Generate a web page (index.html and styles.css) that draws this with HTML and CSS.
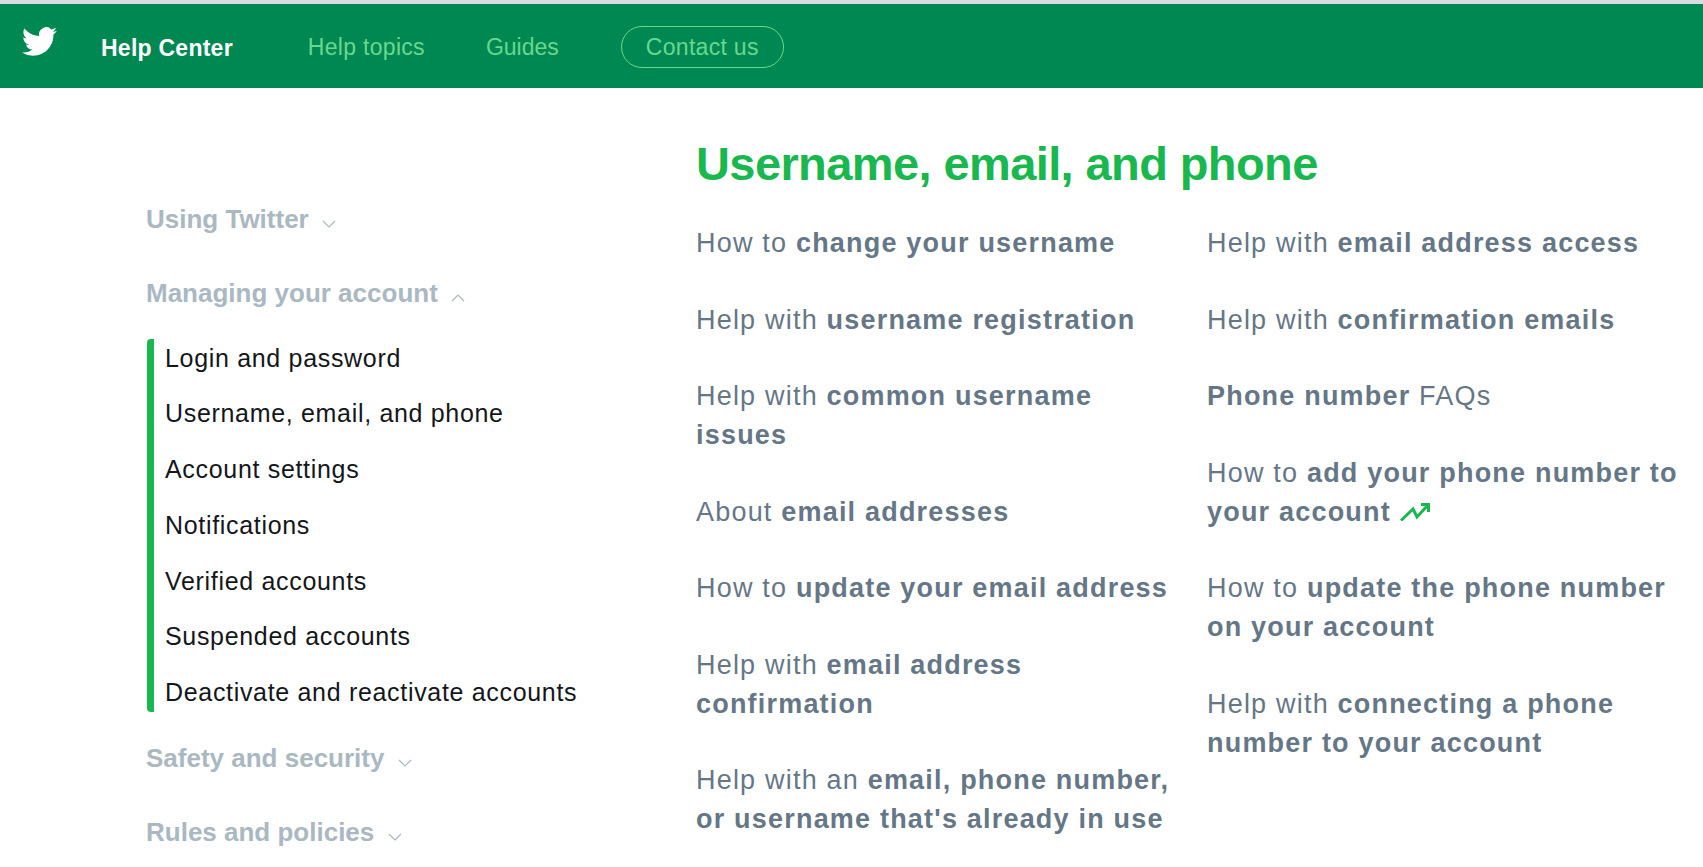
FILE: index.html
```html
<!DOCTYPE html>
<html lang="en">
<head>
    <meta charset="UTF-8">
    <title>Username, email, and phone</title>
    <link rel="stylesheet" href="styles.css">
</head>
<body>
<div class="header">
    <svg class="logo" viewBox="0 0 24 24"><path d="M23.95 4.57a10 10 0 0 1-2.82.77 4.96 4.96 0 0 0 2.16-2.72c-.95.55-2 .96-3.12 1.19a4.92 4.92 0 0 0-8.38 4.48C7.69 8.1 4.07 6.13 1.64 3.16a4.82 4.82 0 0 0-.67 2.48c0 1.71.87 3.21 2.19 4.1a4.9 4.9 0 0 1-2.23-.62v.06a4.92 4.92 0 0 0 3.95 4.83 5 5 0 0 1-2.21.08 4.94 4.94 0 0 0 4.6 3.42A9.87 9.87 0 0 1 0 19.54a13.94 13.94 0 0 0 7.55 2.21c9.05 0 14-7.5 14-13.98 0-.21 0-.42-.02-.63a9.94 9.94 0 0 0 2.46-2.55z"/></svg>
    <a class="brand">Help Center</a>
    <a class="nav-link topics">Help topics</a>
    <a class="nav-link guides">Guides</a>
    <a class="nav-link contact">Contact us</a>
</div>
<div class="main">
    <div class="side">
        <div class="group">Using Twitter <svg class="chev" viewBox="0 0 14 8"><path d="M1 1l6 6 6-6"/></svg></div>
        <div class="group">Managing your account <svg class="chev" viewBox="0 0 14 8"><path d="M1 7l6-6 6 6"/></svg></div>
        <ul class="sub">
            <li>Login and password</li>
            <li>Username, email, and phone</li>
            <li>Account settings</li>
            <li>Notifications</li>
            <li>Verified accounts</li>
            <li>Suspended accounts</li>
            <li>Deactivate and reactivate accounts</li>
        </ul>
        <div class="group">Safety and security <svg class="chev" viewBox="0 0 14 8"><path d="M1 1l6 6 6-6"/></svg></div>
        <div class="group">Rules and policies <svg class="chev" viewBox="0 0 14 8"><path d="M1 1l6 6 6-6"/></svg></div>
    </div>
    <div class="content">
        <h1>Username, email, and phone</h1>
        <div class="cols">
            <div class="col col-left">
                <p>How to <b>change your username</b></p>
                <p>Help with <b>username registration</b></p>
                <p>Help with <b>common username issues</b></p>
                <p>About <b>email addresses</b></p>
                <p>How to <b>update your email address</b></p>
                <p>Help with <b>email address confirmation</b></p>
                <p>Help with an <b>email, phone number, or username that's already in use</b></p>
            </div>
            <div class="col col-right">
                <p>Help with <b>email address access</b></p>
                <p>Help with <b>confirmation emails</b></p>
                <p><b>Phone number</b> FAQs</p>
                <p>How to <b>add your phone number to your account</b> <svg class="trend" viewBox="0 0 30 18"><path d="M1 17.5L13 6l4 8L28 2"/><path d="M21 1.5h7.5V9"/></svg></p>
                <p>How to <b>update the phone number on your account</b></p>
                <p>Help with <b>connecting a phone number to your account</b></p>
            </div>
        </div>
    </div>
</div>
</body>
</html>
```

FILE: styles.css
```css
*{
    margin: 0;
    padding: 0;
    box-sizing: border-box;
}
html, body{
    height: 867px;
    overflow: hidden;
}
body{
    background: #fff;
    font-family: "Liberation Sans", Arial, sans-serif;
}
li{
    list-style: none;
}
.header{
    height: 88px;
    background: #008853;
    border-top: 4px solid #d6dcdf;
    display: flex;
    align-items: center;
    padding-left: 22px;
}
.logo{
    width: 35px;
    height: 35px;
    fill: #fff;
    margin-right: 44px;
    margin-top: -10px;
}
.brand{
    color: #fff;
    font-weight: bold;
    font-size: 23px;
    letter-spacing: 0.25px;
    margin-right: 75px;
    padding-top: 5px;
}
.nav-link{
    color: #69d88c;
    font-size: 23px;
    letter-spacing: 0.3px;
    padding-top: 2px;
}
.guides{
    margin-left: 61px;
    letter-spacing: 0;
}
.contact{
    margin-left: 62px;
    border: 1px solid #69d88c;
    border-radius: 21px;
    height: 42px;
    line-height: 40px;
    padding: 0 24px;
    margin-top: 2px;
}
.main{
    display: flex;
}
.side{
    width: 550px;
    margin-left: 146px;
    padding-top: 112px;
}
.group{
    color: #aab8c2;
    font-weight: bold;
    font-size: 26px;
    height: 39px;
    line-height: 39px;
    margin-bottom: 35px;
    white-space: nowrap;
}
.chev{
    width: 14px;
    height: 8px;
    fill: none;
    stroke: #aab8c2;
    stroke-width: 1.2;
    margin-left: 6px;
}
.sub{
    border-left: 7px solid #19b84f;
    border-radius: 4px;
    margin-left: 1px;
    margin-bottom: 27px;
    margin-top: -9.5px;
    height: 373px;
    padding-left: 11px;
}
.sub li{
    color: #14171a;
    font-size: 25px;
    letter-spacing: 0.68px;
    height: 55.8px;
    line-height: 39px;
}
.content{
    flex: 1;
    padding-top: 50px;
}
h1{
    color: #19b84f;
    font-size: 47px;
    line-height: 52px;
    letter-spacing: -0.6px;
    margin-bottom: 34px;
}
.cols{
    display: flex;
}
.col{
    font-size: 27px;
    letter-spacing: 1.2px;
    line-height: 39px;
    color: #657786;
}
.col-left{
    width: 511px;
    padding-right: 20px;
}
.col-right{
    width: 490px;
}
.col p{
    margin-bottom: 37.5px;
}
.trend{
    width: 30px;
    height: 18px;
    fill: none;
    stroke: #19b84f;
    stroke-width: 3;
}
```
